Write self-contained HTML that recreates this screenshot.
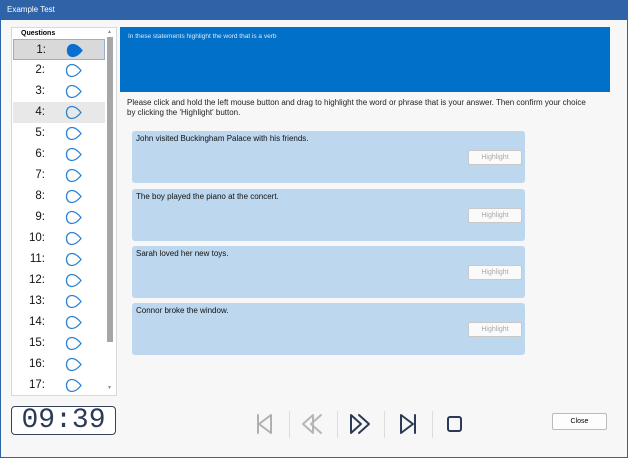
<!DOCTYPE html>
<html><head><style>
*{margin:0;padding:0;box-sizing:border-box}
body{width:628px;height:458px;background:#f7f7f7;font-family:"Liberation Sans",sans-serif;position:relative;overflow:hidden}
.frame{position:absolute;left:0;top:0;width:628px;height:458px;border:1px solid #2f63a8;pointer-events:none}
.title{position:absolute;left:0;top:0;width:628px;height:20px;background:#2f63a8;color:#fff;font-size:8px;line-height:20px;padding-left:7px}
.list{position:absolute;left:11px;top:27px;width:106px;height:369px;background:#fff;border:1px solid #d9d9d9}
.qh{position:absolute;left:9px;top:2px;font-size:7px;font-weight:bold}
.row{position:absolute;left:1px;width:92px;height:21px;font-size:11.5px;line-height:21px;color:#111}
.row span{position:absolute;left:8px;width:24px;text-align:right}
.row svg{position:absolute;left:52px;top:3px}
.sb{position:absolute;left:94px;top:0;width:10px;height:367px}
.card{position:absolute;left:132px;width:393px;height:52px;background:#bcd7ee;border-radius:3px;font-size:8px;padding:3px 4px;color:#111}
.hb{position:absolute;left:336px;top:19px;width:54px;height:15px;background:#fafafa;border:1px solid #c9c9c9;border-radius:2px;color:#aaa;font-size:7px;text-align:center;line-height:13px}
</style></head><body>
<div class="title">Example Test</div>
<div class="list">
<div class="qh">Questions</div>
<div class="sb"><div style="position:absolute;left:1px;top:9px;width:6px;height:305px;background:#a6a6a6"></div>
<div style="position:absolute;left:1px;top:1px;font-size:5px;color:#888">▲</div>
<div style="position:absolute;left:1px;top:357px;font-size:5px;color:#888">▼</div></div>
<div class="row" style="top:11px;background:#d9d9d9;border:1px solid #9aaecb"><span>1:</span><svg width="18" height="15"><path d="M7 1.5C3.5 1.5 1.5 4 1.5 7.5S3.5 13.5 7 13.5C11 13.5 14 10 16 7.5 14 5 11 1.5 7 1.5Z" fill="#0a6fd0" stroke="#0a6fd0" stroke-width="1.3"/></svg></div>
<div class="row" style="top:32px"><span>2:</span><svg width="18" height="15"><path d="M7 1.5C3.5 1.5 1.5 4 1.5 7.5S3.5 13.5 7 13.5C11 13.5 14 10 16 7.5 14 5 11 1.5 7 1.5Z" fill="none" stroke="#2c82d6" stroke-width="1.3"/></svg></div>
<div class="row" style="top:53px"><span>3:</span><svg width="18" height="15"><path d="M7 1.5C3.5 1.5 1.5 4 1.5 7.5S3.5 13.5 7 13.5C11 13.5 14 10 16 7.5 14 5 11 1.5 7 1.5Z" fill="none" stroke="#2c82d6" stroke-width="1.3"/></svg></div>
<div class="row" style="top:74px;background:#e8e8e8"><span>4:</span><svg width="18" height="15"><path d="M7 1.5C3.5 1.5 1.5 4 1.5 7.5S3.5 13.5 7 13.5C11 13.5 14 10 16 7.5 14 5 11 1.5 7 1.5Z" fill="none" stroke="#2c82d6" stroke-width="1.3"/></svg></div>
<div class="row" style="top:95px"><span>5:</span><svg width="18" height="15"><path d="M7 1.5C3.5 1.5 1.5 4 1.5 7.5S3.5 13.5 7 13.5C11 13.5 14 10 16 7.5 14 5 11 1.5 7 1.5Z" fill="none" stroke="#2c82d6" stroke-width="1.3"/></svg></div>
<div class="row" style="top:116px"><span>6:</span><svg width="18" height="15"><path d="M7 1.5C3.5 1.5 1.5 4 1.5 7.5S3.5 13.5 7 13.5C11 13.5 14 10 16 7.5 14 5 11 1.5 7 1.5Z" fill="none" stroke="#2c82d6" stroke-width="1.3"/></svg></div>
<div class="row" style="top:137px"><span>7:</span><svg width="18" height="15"><path d="M7 1.5C3.5 1.5 1.5 4 1.5 7.5S3.5 13.5 7 13.5C11 13.5 14 10 16 7.5 14 5 11 1.5 7 1.5Z" fill="none" stroke="#2c82d6" stroke-width="1.3"/></svg></div>
<div class="row" style="top:158px"><span>8:</span><svg width="18" height="15"><path d="M7 1.5C3.5 1.5 1.5 4 1.5 7.5S3.5 13.5 7 13.5C11 13.5 14 10 16 7.5 14 5 11 1.5 7 1.5Z" fill="none" stroke="#2c82d6" stroke-width="1.3"/></svg></div>
<div class="row" style="top:179px"><span>9:</span><svg width="18" height="15"><path d="M7 1.5C3.5 1.5 1.5 4 1.5 7.5S3.5 13.5 7 13.5C11 13.5 14 10 16 7.5 14 5 11 1.5 7 1.5Z" fill="none" stroke="#2c82d6" stroke-width="1.3"/></svg></div>
<div class="row" style="top:200px"><span>10:</span><svg width="18" height="15"><path d="M7 1.5C3.5 1.5 1.5 4 1.5 7.5S3.5 13.5 7 13.5C11 13.5 14 10 16 7.5 14 5 11 1.5 7 1.5Z" fill="none" stroke="#2c82d6" stroke-width="1.3"/></svg></div>
<div class="row" style="top:221px"><span>11:</span><svg width="18" height="15"><path d="M7 1.5C3.5 1.5 1.5 4 1.5 7.5S3.5 13.5 7 13.5C11 13.5 14 10 16 7.5 14 5 11 1.5 7 1.5Z" fill="none" stroke="#2c82d6" stroke-width="1.3"/></svg></div>
<div class="row" style="top:242px"><span>12:</span><svg width="18" height="15"><path d="M7 1.5C3.5 1.5 1.5 4 1.5 7.5S3.5 13.5 7 13.5C11 13.5 14 10 16 7.5 14 5 11 1.5 7 1.5Z" fill="none" stroke="#2c82d6" stroke-width="1.3"/></svg></div>
<div class="row" style="top:263px"><span>13:</span><svg width="18" height="15"><path d="M7 1.5C3.5 1.5 1.5 4 1.5 7.5S3.5 13.5 7 13.5C11 13.5 14 10 16 7.5 14 5 11 1.5 7 1.5Z" fill="none" stroke="#2c82d6" stroke-width="1.3"/></svg></div>
<div class="row" style="top:284px"><span>14:</span><svg width="18" height="15"><path d="M7 1.5C3.5 1.5 1.5 4 1.5 7.5S3.5 13.5 7 13.5C11 13.5 14 10 16 7.5 14 5 11 1.5 7 1.5Z" fill="none" stroke="#2c82d6" stroke-width="1.3"/></svg></div>
<div class="row" style="top:305px"><span>15:</span><svg width="18" height="15"><path d="M7 1.5C3.5 1.5 1.5 4 1.5 7.5S3.5 13.5 7 13.5C11 13.5 14 10 16 7.5 14 5 11 1.5 7 1.5Z" fill="none" stroke="#2c82d6" stroke-width="1.3"/></svg></div>
<div class="row" style="top:326px"><span>16:</span><svg width="18" height="15"><path d="M7 1.5C3.5 1.5 1.5 4 1.5 7.5S3.5 13.5 7 13.5C11 13.5 14 10 16 7.5 14 5 11 1.5 7 1.5Z" fill="none" stroke="#2c82d6" stroke-width="1.3"/></svg></div>
<div class="row" style="top:347px"><span>17:</span><svg width="18" height="15"><path d="M7 1.5C3.5 1.5 1.5 4 1.5 7.5S3.5 13.5 7 13.5C11 13.5 14 10 16 7.5 14 5 11 1.5 7 1.5Z" fill="none" stroke="#2c82d6" stroke-width="1.3"/></svg></div>
</div>

<div style="position:absolute;left:120px;top:27px;width:490px;height:65px;background:#0070c9;color:#dce9f7;font-size:6.5px;padding:6px 8px">In these statements highlight the word that is a verb</div>
<div style="position:absolute;left:127px;top:98px;width:460px;font-size:8px;line-height:10px;color:#222">Please click and hold the left mouse button and drag to highlight the word or phrase that is your answer. Then confirm your choice by clicking the 'Highlight' button.</div>

<div class="card" style="top:131px">John visited Buckingham Palace with his friends.<div class="hb">Highlight</div></div>
<div class="card" style="top:189px">The boy played the piano at the concert.<div class="hb">Highlight</div></div>
<div class="card" style="top:246px">Sarah loved her new toys.<div class="hb">Highlight</div></div>
<div class="card" style="top:303px">Connor broke the window.<div class="hb">Highlight</div></div>

<div style="position:absolute;left:11px;top:406px;width:105px;height:29px;border:1px solid #34425a;border-radius:4px;background:#fff;text-align:center;font-family:'Liberation Mono',monospace;font-size:28px;line-height:27px;color:#2b3a55">09:39</div>

<svg style="position:absolute;left:240px;top:400px" width="240" height="50">
<g fill="none" stroke-width="2" stroke-linejoin="round" stroke-linecap="round">
<path d="M18 15V33" stroke="#b0b0b0"/><path d="M31 15L19 24 31 33Z" stroke="#b0b0b0"/>
<path d="M73 15L63 24 73 33Z" stroke="#b6b6b6"/><path d="M81 15L71 24 81 33" stroke="#b6b6b6"/>
<path d="M111 15L121 24 111 33Z" stroke="#2b3a55"/><path d="M119 15L129 24 119 33" stroke="#2b3a55"/>
<path d="M161 15L173 24 161 33Z" stroke="#2b3a55"/><path d="M175 15V33" stroke="#2b3a55"/>
<rect x="208" y="17" width="13" height="14" rx="2" stroke="#2b3a55"/>
</g>
<g stroke="#dcdcdc"><path d="M49.5 11V38M97.5 11V38M144.5 11V38M192.5 11V38"/></g>
</svg>

<div style="position:absolute;left:552px;top:413px;width:55px;height:17px;border:1px solid #bbb;border-radius:2px;background:#fdfdfd;font-size:7px;text-align:center;line-height:15px">Close</div>
<div class="frame"></div>
</body></html>
